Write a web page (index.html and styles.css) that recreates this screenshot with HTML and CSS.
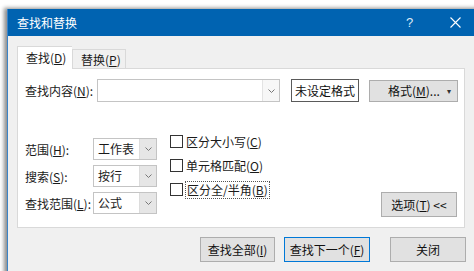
FILE: index.html
```html
<!DOCTYPE html>
<html lang="zh-CN">
<head>
    <meta charset="UTF-8">
    <title>查找和替换</title>
    <link rel="stylesheet" href="styles.css">
</head>
<body>
    <div class="dialog">
        <div class="titlebar">
            <span class="title">查找和替换</span>
            <span class="help">?</span>
            <span class="close">
                <svg width="11" height="11" viewBox="0 0 11 11"><path d="M0.5 0.5 L10.5 10.5 M10.5 0.5 L0.5 10.5" stroke="#fff" stroke-width="1.1"/></svg>
            </span>
        </div>
        <div class="content">
            <div class="tabs">
                <div class="tab active">查找(<u>D</u>)</div>
                <div class="tab">替换(<u>P</u>)</div>
            </div>
            <div class="panel">
                <div class="find-row">
                    <label class="find-label">查找内容(<u>N</u>):</label>
                    <div class="combo edit">
                        <div class="combo-text"></div>
                        <div class="combo-btn">
                            <svg width="7" height="4" viewBox="0 0 7 4"><polyline points="0.5,0.5 3.5,3.5 6.5,0.5" fill="none" stroke="#777" stroke-width="1"/></svg>
                        </div>
                    </div>
                    <div class="format-preview">未设定格式</div>
                    <div class="btn format-btn">格式(<u>M</u>)... <span class="caret">▾</span></div>
                </div>
                <div class="options">
                    <div class="selects">
                        <div class="opt-row">
                            <label class="opt-label">范围(<u>H</u>):</label>
                            <div class="combo small">
                                <div class="combo-text">工作表</div>
                                <div class="combo-btn gray">
                                    <svg width="7" height="4" viewBox="0 0 7 4"><polyline points="0.5,0.5 3.5,3.5 6.5,0.5" fill="none" stroke="#777" stroke-width="1"/></svg>
                                </div>
                            </div>
                        </div>
                        <div class="opt-row">
                            <label class="opt-label">搜索(<u>S</u>):</label>
                            <div class="combo small">
                                <div class="combo-text">按行</div>
                                <div class="combo-btn gray">
                                    <svg width="7" height="4" viewBox="0 0 7 4"><polyline points="0.5,0.5 3.5,3.5 6.5,0.5" fill="none" stroke="#777" stroke-width="1"/></svg>
                                </div>
                            </div>
                        </div>
                        <div class="opt-row">
                            <label class="opt-label">查找范围(<u>L</u>):</label>
                            <div class="combo small">
                                <div class="combo-text">公式</div>
                                <div class="combo-btn gray">
                                    <svg width="7" height="4" viewBox="0 0 7 4"><polyline points="0.5,0.5 3.5,3.5 6.5,0.5" fill="none" stroke="#777" stroke-width="1"/></svg>
                                </div>
                            </div>
                        </div>
                    </div>
                    <div class="checks">
                        <div class="check"><span class="box"></span><span>区分大小写(<u>C</u>)</span></div>
                        <div class="check"><span class="box"></span><span>单元格匹配(<u>O</u>)</span></div>
                        <div class="check"><span class="box"></span><span class="focus">区分全/半角(<u>B</u>)</span></div>
                    </div>
                    <div class="btn options-btn">选项(<u>T</u>) &lt;&lt;</div>
                </div>
            </div>
            <div class="footer">
                <div class="btn foot-btn find-all">查找全部(<u>I</u>)</div>
                <div class="btn foot-btn find-next">查找下一个(<u>F</u>)</div>
                <div class="btn foot-btn close-btn">关闭</div>
            </div>
        </div>
    </div>
</body>
</html>
```

FILE: styles.css
```css
html, body {
    margin: 0;
    padding: 0;
    background-color: #ffffff;
    overflow: hidden;
    height: 271px;
}
body {
    font-family: "Noto Sans CJK SC", "Liberation Sans", sans-serif;
    font-size: 12px;
    color: #1a1a1a;
    white-space: nowrap;
}
u {
    text-decoration: underline;
    text-underline-offset: 1px;
}
.dialog {
    margin: 9px 0 0 7px;
    width: 480px;
    height: 280px;
    background-color: #f0f0f0;
    border-left: 1px solid #3b84c8;
    box-shadow: -2px 0 4px 1px rgba(0, 0, 0, 0.45);
}
.titlebar {
    height: 27px;
    background-color: #0063b1;
    color: #ffffff;
    display: flex;
    align-items: center;
}
.title {
    margin-left: 9px;
    flex: 1;
}
.help {
    font-family: "Liberation Sans", sans-serif;
    font-size: 13px;
    color: #dce9f6;
    width: 44px;
}
.close {
    width: 30px;
    margin-right: 8px;
    display: flex;
    align-items: center;
}
.content {
    padding: 9px 0 0 9px;
}
.tabs {
    display: flex;
    align-items: flex-end;
    height: 23px;
}
.tab {
    height: 19px;
    line-height: 19px;
    width: 54px;
    padding-left: 8px;
    box-sizing: border-box;
    border: 1px solid #d9d9d9;
    border-bottom: none;
    background-color: #f0f0f0;
}
.tab.active {
    height: 23px;
    line-height: 22px;
    width: 55px;
    background-color: #ffffff;
    border-right: none;
    margin-bottom: -1px;
    position: relative;
}
.panel {
    width: 448px;
    height: 160px;
    box-sizing: border-box;
    background-color: #ffffff;
    border: 1px solid #d9d9d9;
}
.find-row {
    display: flex;
    align-items: center;
    margin: 10px 0 0 7px;
    height: 23px;
}
.find-label {
    width: 72px;
}
.combo {
    display: flex;
    border: 1px solid #c4c4c4;
    box-sizing: border-box;
    background-color: #ffffff;
}
.combo.edit {
    width: 183px;
    height: 23px;
}
.combo-text {
    flex: 1;
    padding-left: 7px;
    line-height: 20px;
}
.combo-btn {
    width: 16px;
    display: flex;
    align-items: center;
    justify-content: center;
    border-left: 1px solid #e3e3e3;
    background-color: #f7f7f7;
}
.combo-btn.gray {
    background-color: #e6e6e6;
    border-left: 1px solid #dcdcdc;
}
.format-preview {
    margin-left: 11px;
    width: 68px;
    height: 23px;
    box-sizing: border-box;
    border: 1px solid #5a5a5a;
    text-align: center;
    line-height: 21px;
    color: #111;
}
.btn {
    background-color: #e1e1e1;
    border: 1px solid #adadad;
    box-sizing: border-box;
    color: #111;
    text-align: center;
}
.format-btn {
    margin-left: 10px;
    width: 89px;
    height: 22px;
    line-height: 20px;
    padding-left: 18px;
    text-align: left;
    position: relative;
}
.caret {
    position: absolute;
    right: 6px;
    top: 0;
    font-size: 8px;
    color: #333;
}
.options {
    display: flex;
    margin: 36px 7px 0 7px;
}
.selects {
    display: flex;
    flex-direction: column;
    gap: 5px;
}
.opt-row {
    display: flex;
    align-items: center;
    height: 22px;
}
.opt-label {
    width: 68px;
}
.combo.small {
    width: 64px;
    height: 22px;
}
.combo.small .combo-text {
    padding-left: 4px;
    line-height: 20px;
}
.checks {
    margin: -6px 0 0 13px;
    display: flex;
    flex-direction: column;
    gap: 5px;
}
.check {
    display: flex;
    align-items: center;
    height: 19px;
}
.box {
    width: 11px;
    height: 11px;
    border: 1px solid #333;
    background: #fff;
    margin-right: 3px;
}
.focus {
    outline: 1px dotted #555;
    padding: 0 1px;
    line-height: 16px;
}
.options-btn {
    margin: 54px 0 0 auto;
    width: 76px;
    height: 25px;
    line-height: 23px;
}
.footer {
    display: flex;
    margin-top: 9px;
    padding-left: 183px;
}
.foot-btn {
    height: 25px;
    line-height: 23px;
}
.find-all {
    width: 75px;
}
.find-next {
    width: 86px;
    margin-left: 9px;
    border: 1px solid #0078d7;
}
.close-btn {
    width: 76px;
    margin-left: 20px;
}
```
